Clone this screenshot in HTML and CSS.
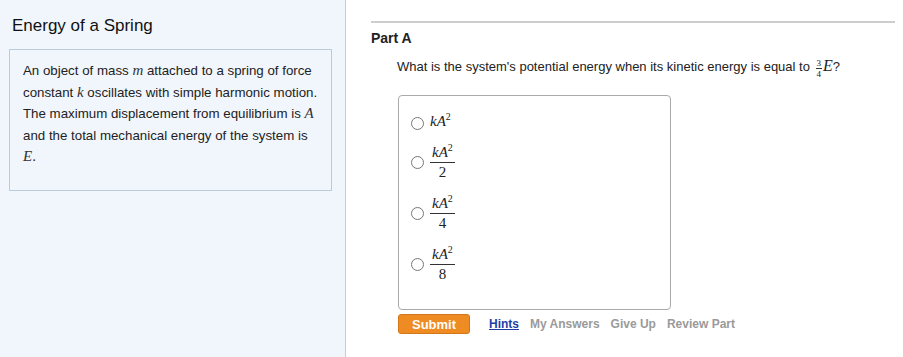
FILE: index.html
```html
<!DOCTYPE html>
<html lang="en">
<head>
    <meta charset="UTF-8">
    <title>Energy of a Spring</title>
    <link rel="stylesheet" href="styles.css">
</head>
<body>
    <div class="intro">
        <h1 class="intro-title">Energy of a Spring</h1>
        <div class="intro-box">
            <p>An object of mass <i class="m">m</i> attached to a spring of force constant <i class="m">k</i> oscillates with simple harmonic motion. The maximum displacement from equilibrium is <i class="m">A</i> and the total mechanical energy of the system is <i class="m">E</i><span class="m">.</span></p>
        </div>
    </div>

    <div class="part">
        <div class="part-title">Part A</div>
        <p class="question">What is the system's potential energy when its kinetic energy is equal to
            <span class="frac small"><span class="num">3</span><span class="den">4</span></span><i class="m">E</i>?</p>

        <div class="choices">
            <label class="choice"><input type="radio" name="a"><span class="m"><i>kA</i><sup>2</sup></span></label>
            <label class="choice"><input type="radio" name="a"><span class="frac"><span class="num"><i>kA</i><sup>2</sup></span><span class="den">2</span></span></label>
            <label class="choice"><input type="radio" name="a"><span class="frac"><span class="num"><i>kA</i><sup>2</sup></span><span class="den">4</span></span></label>
            <label class="choice"><input type="radio" name="a"><span class="frac"><span class="num"><i>kA</i><sup>2</sup></span><span class="den">8</span></span></label>
        </div>

        <div class="actions">
            <button class="submit-btn">Submit</button>
            <a href="#" class="hints">Hints</a>
            <span class="action">My Answers</span>
            <span class="action">Give Up</span>
            <span class="action">Review Part</span>
        </div>
    </div>
</body>
</html>
```

FILE: styles.css
```css
/* Base styling */
body {
    margin: 0;
    height: 357px;
    display: flex;
    font-family: "Liberation Sans", Arial, sans-serif;
    color: #222;
    background-color: #fff;
    overflow: hidden;
}

/* Math text */
.m,
.frac {
    font-family: "Liberation Serif", "Times New Roman", serif;
}

i.m,
.m i,
.frac i {
    font-style: italic;
}

sup {
    font-size: 10px;
    vertical-align: 6px;
    line-height: 0;
}

.frac {
    display: inline-flex;
    flex-direction: column;
    align-items: center;
    vertical-align: middle;
    font-size: 15px;
    line-height: 17px;
}

.frac .num {
    border-bottom: 1px solid #333;
    padding: 0 2px 1px;
}

.frac .den {
    padding-top: 1px;
}

.frac.small {
    font-size: 9px;
    line-height: 9px;
    vertical-align: 5px;
    margin: 0 1px 0 2px;
}

.frac.small .num {
    padding: 0 1px 0;
}

.frac.small .den {
    padding-top: 1px;
}

/* Left intro panel */
.intro {
    width: 346px;
    flex-shrink: 0;
    background-color: #f1f6fd;
    border-right: 1px solid #bccfe2;
    box-sizing: border-box;
    padding: 16px 13px 0 9px;
}

.intro-title {
    font-size: 17px;
    font-weight: normal;
    color: #111;
    margin: 0 0 13px 3px;
}

.intro-box {
    border: 1px solid #bacbdc;
    height: 142px;
    box-sizing: border-box;
    padding: 10px 10px 0 13px;
}

.intro-box p {
    margin: 0;
    font-size: 13.3px;
    line-height: 21.5px;
    color: #222;
}

.intro-box .m {
    font-size: 15px;
    line-height: 0;
    color: #333;
}

/* Right part */
.part {
    flex: 1;
    padding: 21px 8px 0 25px;
}

.part-title {
    border-top: 2px solid #cdcdcd;
    padding-top: 7px;
    font-size: 14px;
    font-weight: bold;
    color: #222;
}

.question {
    margin: 12px 0 0 26px;
    font-size: 13px;
    line-height: 18px;
    color: #222;
}

.question i.m {
    font-size: 16px;
    line-height: 0;
}

.choices {
    margin: 16px 0 0 27px;
    width: 273px;
    height: 215px;
    box-sizing: border-box;
    border: 1px solid #aaa;
    border-radius: 4px;
    padding: 21px 0 0 12px;
    display: flex;
    flex-direction: column;
    gap: 14px;
}

.choice {
    display: flex;
    align-items: center;
    font-family: "Liberation Serif", serif;
    font-size: 15px;
    line-height: 17px;
}

.choice > .m {
    align-self: flex-start;
    margin-top: -4px;
}

.choice input {
    margin: 0 6px 0 0;
    width: 13px;
    height: 13px;
}

/* Actions */
.actions {
    margin: 4px 0 0 27px;
    display: flex;
    align-items: center;
    gap: 11px;
    font-size: 12px;
    font-weight: bold;
}

.submit-btn {
    width: 72px;
    height: 20px;
    padding: 0;
    background-color: #ee8b22;
    border: 1px solid #d2761a;
    border-radius: 3px;
    color: #fff;
    font-family: "Liberation Sans", Arial, sans-serif;
    font-size: 13px;
    font-weight: bold;
    margin-right: 8px;
    cursor: pointer;
}

.hints {
    color: #1f3fa6;
}

.action {
    color: #9a9a9a;
}
```
